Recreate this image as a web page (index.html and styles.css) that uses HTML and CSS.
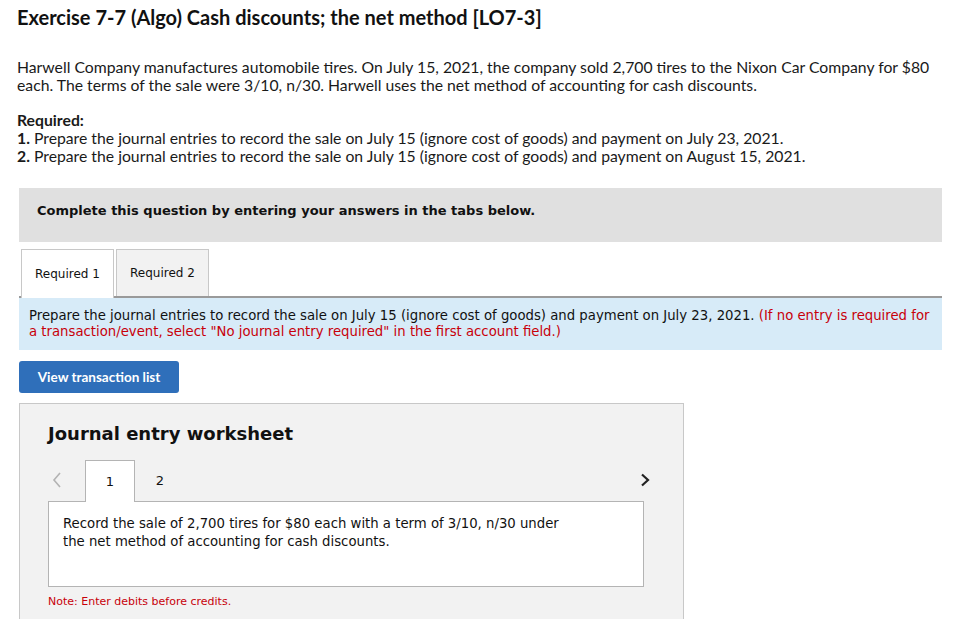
FILE: index.html
```html
<!DOCTYPE html>
<html>
<head>
<meta charset="utf-8">
<link rel="stylesheet" href="styles.css">
</head>
<body>
<div class="page">
  <h1 class="title">Exercise 7-7 (Algo) Cash discounts; the net method [LO7-3]</h1>
  <p class="intro">Harwell Company manufactures automobile tires. On July 15, 2021, the company sold 2,700 tires to the Nixon Car Company for $80 each. The terms of the sale were 3/10, n/30. Harwell uses the net method of accounting for cash discounts.</p>
  <div class="required">
    <div class="req-label">Required:</div>
    <div><b>1.</b> Prepare the journal entries to record the sale on July 15 (ignore cost of goods) and payment on July 23, 2021.</div>
    <div><b>2.</b> Prepare the journal entries to record the sale on July 15 (ignore cost of goods) and payment on August 15, 2021.</div>
  </div>
  <div class="complete">Complete this question by entering your answers in the tabs below.</div>
  <div class="tabs">
    <div class="tab active">Required 1</div>
    <div class="tab">Required 2</div>
  </div>
  <div class="instr">Prepare the journal entries to record the sale on July 15 (ignore cost of goods) and payment on July 23, 2021. <span class="red">(If no entry is required for a transaction/event, select "No journal entry required" in the first account field.)</span></div>
  <button class="btn">View transaction list</button>
  <div class="worksheet">
    <h2 class="ws-title">Journal entry worksheet</h2>
    <div class="ws-nav">
      <span class="arrow prev"><svg width="10" height="16" viewBox="0 0 10 16"><path d="M8 1 L2 8 L8 15" fill="none" stroke="#b3b3b3" stroke-width="1.6"/></svg></span>
      <span class="ws-tab active">1</span>
      <span class="ws-tab">2</span>
      <span class="spacer"></span>
      <span class="arrow next"><svg width="10" height="14" viewBox="0 0 10 14"><path d="M2 1.5 L8 7 L2 12.5" fill="none" stroke="#222" stroke-width="2.2"/></svg></span>
    </div>
    <div class="ws-box">Record the sale of 2,700 tires for $80 each with a term of 3/10, n/30 under<br>the net method of accounting for cash discounts.</div>
    <div class="note">Note: Enter debits before credits.</div>
  </div>
</div>
</body>
</html>
```

FILE: styles.css
```css
html, body { margin: 0; padding: 0; background: #fff; }
body { width: 976px; height: 619px; overflow: hidden; }
.page { padding: 0 0 0 17px; color: #1a1a1a; font-family: "Lato", "Liberation Sans", sans-serif; }
.title { margin: 5px 0 0; font-size: 20px; font-weight: 700; line-height: 24px; color: #111; }
.intro { margin: 29px 0 0; font-size: 15.75px; line-height: 18px; width: 925px; }
.required { margin-top: 17px; font-size: 15.75px; line-height: 18px; }
.req-label { font-weight: 700; }
.complete { margin: 23px 0 0 2px; width: 923px; height: 54px; box-sizing: border-box; padding: 15px 18px 0; background: #e0e0e0; font-family: "DejaVu Sans", sans-serif; font-weight: 700; font-size: 13px; line-height: 16px; color: #111; }
.tabs { margin: 7px 0 0 2px; width: 923px; display: flex; gap: 2px; padding-left: 2px; box-sizing: border-box; border-bottom: 2px solid #9a9a9a; height: 49px; }
.tab { width: 93px; box-sizing: border-box; border: 1px solid #c8c8c8; border-bottom: none; background: #f2f2f2; font-family: "DejaVu Sans", sans-serif; font-size: 12px; color: #111; display: flex; align-items: center; justify-content: center; }
.tab.active { background: #fff; margin-bottom: -2px; height: 49px; }
.instr { margin: 0 0 0 2px; width: 923px; box-sizing: border-box; background: #d7ebf8; padding: 10px 10px 10px 10px; font-family: "DejaVu Sans", sans-serif; font-size: 13.25px; line-height: 16px; color: #111; }
.red { color: #c8000a; }
.btn { display: block; margin: 11px 0 0 2px; width: 160px; height: 32px; border: none; border-radius: 3px; background: #2f6fba; color: #fff; font-family: "Lato", "Liberation Sans", sans-serif; font-weight: 700; font-size: 13.5px; padding: 0; }
.worksheet { margin: 10px 0 0 2px; width: 665px; height: 230px; box-sizing: border-box; background: #f2f2f2; border: 1px solid #c8c8c8; padding: 0 39px 0 28px; }
.ws-title { margin: 18px 0 0; font-family: "DejaVu Sans", sans-serif; font-size: 18px; font-weight: 700; line-height: 24px; color: #111; }
.ws-nav { margin-top: 13px; display: flex; align-items: flex-end; height: 42px; font-family: "DejaVu Sans", sans-serif; font-size: 13px; color: #111; }
.arrow { height: 42px; display: flex; align-items: center; }
.prev { width: 37px; padding-left: 4px; box-sizing: border-box; }
.ws-tab { width: 50px; height: 42px; box-sizing: border-box; display: flex; align-items: center; justify-content: center; }
.ws-tab.active { background: #fff; border: 1px solid #b4b4b4; border-bottom: none; margin-bottom: -1px; height: 42px; position: relative; z-index: 1; }
.spacer { flex: 1; }
.next { margin-right: -6px; }
.ws-box { height: 86px; box-sizing: border-box; background: #fff; border: 1px solid #b4b4b4; padding: 13px 14px 0; font-family: "DejaVu Sans", sans-serif; font-size: 13.25px; line-height: 18px; color: #111; }
.note { margin-top: 8px; font-family: "DejaVu Sans", sans-serif; font-size: 11px; color: #c8000a; }
```
